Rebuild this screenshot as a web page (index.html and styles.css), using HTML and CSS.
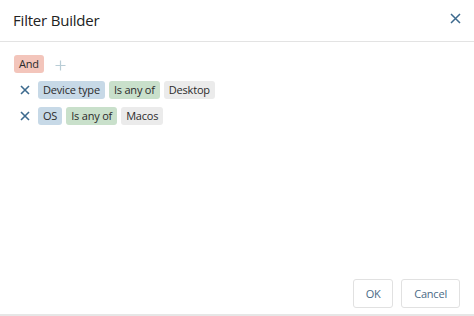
FILE: index.html
```html
<!DOCTYPE html>
<html>
<head>
<meta charset="utf-8">
<link rel="stylesheet" href="styles.css">
</head>
<body>
<div class="dialog">
  <div class="header">
    <div class="title">Filter Builder</div>
    <button class="close" aria-label="Close">
      <svg width="11" height="11" viewBox="0 0 11 11"><path d="M1 1L10 10M10 1L1 10" stroke="#3d6a8e" stroke-width="1.5" fill="none"/></svg>
    </button>
  </div>
  <div class="body">
    <div class="group">
      <span class="tag op">And</span>
      <span class="add">
        <svg width="11" height="11" viewBox="0 0 11 11"><path d="M5.5 0.5V10.5M0.5 5.5H10.5" stroke="#b9cdd6" stroke-width="1.2" fill="none"/></svg>
      </span>
    </div>
    <div class="cond">
      <span class="remove"><svg width="10" height="10" viewBox="0 0 10 10"><path d="M1 1L9 9M9 1L1 9" stroke="#3d6a8e" stroke-width="1.6" fill="none"/></svg></span>
      <span class="tag field">Device type</span>
      <span class="tag oper">Is any of</span>
      <span class="tag val">Desktop</span>
    </div>
    <div class="cond">
      <span class="remove"><svg width="10" height="10" viewBox="0 0 10 10"><path d="M1 1L9 9M9 1L1 9" stroke="#3d6a8e" stroke-width="1.6" fill="none"/></svg></span>
      <span class="tag field">OS</span>
      <span class="tag oper">Is any of</span>
      <span class="tag val">Macos</span>
    </div>
  </div>
  <div class="footer">
    <button class="btn ok">OK</button>
    <button class="btn">Cancel</button>
  </div>
</div>
</body>
</html>
```

FILE: styles.css
```css
html, body {
  margin: 0;
  padding: 0;
  background: #fff;
}
body {
  font-family: "Open Sans", "Noto Sans", sans-serif;
  color: #333;
}
.dialog {
  width: 474px;
  height: 316px;
  box-sizing: border-box;
  display: flex;
  flex-direction: column;
  border-bottom: 2px solid #e6e6e6;
}
.header {
  height: 42px;
  box-sizing: border-box;
  border-bottom: 1px solid #e3e3e3;
  display: flex;
  align-items: center;
  justify-content: space-between;
  padding: 0 13px 2px 13px;
}
.title {
  font-size: 15px;
  letter-spacing: -0.2px;
  color: #222;
}
.close {
  border: none;
  background: none;
  padding: 0;
  width: 11px;
  height: 11px;
  display: flex;
  align-items: center;
  justify-content: center;
  margin-top: -2px;
}
.body {
  flex: 1;
  padding: 13px 14px 0 14px;
  display: flex;
  flex-direction: column;
  gap: 8px;
}
.group {
  display: flex;
  align-items: center;
  gap: 11px;
  height: 18px;
}
.add {
  display: flex;
  width: 11px;
  height: 11px;
  margin-top: 2px;
}
.cond {
  display: flex;
  align-items: center;
  gap: 4px;
  padding-left: 6px;
}
.remove {
  display: flex;
  width: 10px;
  height: 10px;
  margin-right: 4px;
}
.tag {
  display: inline-block;
  font-size: 11px;
  letter-spacing: -0.2px;
  line-height: 18px;
  height: 18px;
  padding: 0 5px;
  border-radius: 3px;
  color: #2b2b2b;
}
.op { background: #f3c5bb; }
.field { background: #c7d9e7; }
.oper { background: #c9e0cb; }
.val { background: #ebebeb; }
.footer {
  display: flex;
  justify-content: flex-end;
  gap: 8px;
  padding: 0 14px 6px 0;
}
.btn {
  font-family: "Open Sans", "Noto Sans", sans-serif;
  font-size: 11px;
  letter-spacing: -0.2px;
  color: #4b6a86;
  background: #fff;
  border: 1px solid #e1e1e1;
  border-radius: 3px;
  height: 29px;
  padding: 0 12px;
}
.ok {
  width: 40px;
  padding: 0;
}
```
